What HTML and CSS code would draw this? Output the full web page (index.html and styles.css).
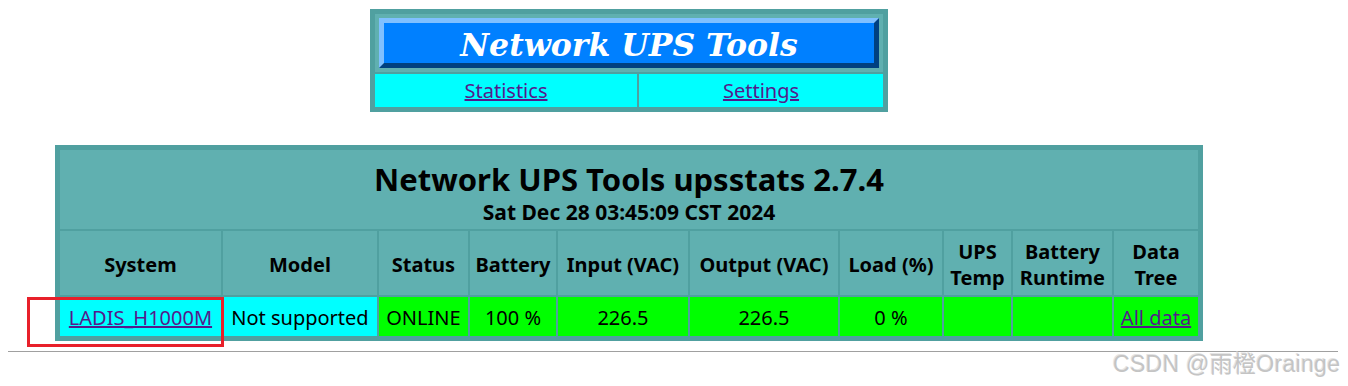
FILE: index.html
```html
<!DOCTYPE html>
<html>
<head>
<meta charset="utf-8">
<title>Network UPS Tools upsstats</title>
<link rel="stylesheet" href="styles.css">
</head>
<body>
<div class="page">
  <table class="nav">
    <tr>
      <td class="nav-head" colspan="2"><div class="logo">Network UPS Tools</div></td>
    </tr>
    <tr>
      <td class="nav-cell nav-left"><a href="#">Statistics</a></td>
      <td class="nav-cell nav-right"><a href="#">Settings</a></td>
    </tr>
  </table>

  <table class="stats">
    <colgroup>
      <col class="c-system"><col class="c-model"><col class="c-status"><col class="c-battery"><col class="c-input"><col class="c-output"><col class="c-load"><col class="c-temp"><col class="c-runtime"><col class="c-tree">
    </colgroup>
    <tr>
      <th class="title" colspan="10">
        <div class="title-main">Network UPS Tools upsstats 2.7.4</div>
        <div class="title-date">Sat Dec 28 03:45:09 CST 2024</div>
      </th>
    </tr>
    <tr class="head">
      <th>System</th>
      <th>Model</th>
      <th>Status</th>
      <th>Battery</th>
      <th>Input (VAC)</th>
      <th>Output (VAC)</th>
      <th>Load (%)</th>
      <th>UPS<br>Temp</th>
      <th>Battery<br>Runtime</th>
      <th>Data<br>Tree</th>
    </tr>
    <tr class="data">
      <td class="cyan"><a href="#">LADIS_H1000M</a></td>
      <td class="cyan">Not supported</td>
      <td class="green">ONLINE</td>
      <td class="green">100 %</td>
      <td class="green">226.5</td>
      <td class="green">226.5</td>
      <td class="green">0 %</td>
      <td class="green"></td>
      <td class="green"></td>
      <td class="green"><a href="#">All data</a></td>
    </tr>
  </table>
</div>
<hr class="rule">
<div class="annotation"></div>
<div class="watermark">CSDN @雨橙Orainge</div>
</body>
</html>
```

FILE: styles.css
```css
html, body {
  margin: 0;
  padding: 0;
  background: #ffffff;
}

body {
  margin: 8px;
  font-family: "Noto Sans", "Open Sans", "Noto Sans CJK SC", sans-serif;
  color: #000000;
  position: relative;
  min-height: 370px;
}

.page {
  width: 1242px;
}

a {
  color: #551a8b;
  text-decoration: underline;
}

/* ---- top navigation table ---- */
.nav {
  width: 518px;
  margin: 1px auto 0;
  background: #50a0a0;
  border-collapse: separate;
  border-spacing: 2px;
  padding: 3px;
}

.nav-head {
  background: #60b0b0;
  padding: 4px;
  height: 58px;
  box-sizing: border-box;
}

.logo {
  box-sizing: border-box;
  height: 50px;
  background: #0080ff;
  border: 5px solid;
  border-color: #80c0ff #004080 #004080 #80c0ff;
  color: #ffffff;
  font-family: "DejaVu Serif", "Liberation Serif", serif;
  font-weight: bold;
  font-style: italic;
  font-size: 31.5px;
  line-height: 43px;
  text-align: center;
}

.nav-cell {
  background: #00ffff;
  height: 33px;
  padding: 0;
  text-align: center;
  font-size: 20px;
  line-height: 33px;
}

.nav-left {
  width: 262px;
}

/* ---- stats table ---- */
.stats {
  width: 1148px;
  margin: 33px auto 0;
  table-layout: fixed;
  background: #50a0a0;
  border-collapse: separate;
  border-spacing: 2px;
  padding: 3px;
}

.c-system { width: 161px; }
.c-model { width: 154px; }
.c-status { width: 89px; }
.c-battery { width: 86px; }
.c-input { width: 130px; }
.c-output { width: 148px; }
.c-load { width: 102px; }
.c-temp { width: 67px; }
.c-runtime { width: 99px; }
.c-tree { width: 84px; }

.stats th,
.stats td {
  padding: 0;
  text-align: center;
  white-space: nowrap;
  overflow: hidden;
}

.title {
  background: #60b0b0;
  height: 79px;
  vertical-align: middle;
}

.title-main {
  font-size: 31px;
  font-weight: bold;
  line-height: 42px;
  padding-top: 3px;
}

.title-date {
  font-size: 21px;
  font-weight: bold;
  line-height: 25px;
}

.head th {
  background: #60b0b0;
  height: 64px;
  box-sizing: border-box;
  padding-top: 4px;
  font-size: 20px;
  font-weight: bold;
  line-height: 26px;
}

.data td {
  height: 39px;
  box-sizing: border-box;
  padding-top: 3px;
  font-size: 20px;
  line-height: 26px;
}

.cyan { background: #00ffff; }
.green { background: #00ff00; }

.rule {
  border: 0;
  border-top: 1px solid #a0a0a0;
  height: 0;
  margin-top: 10px;
  margin-bottom: 0;
  margin-left: -8px;
  margin-right: 0;
  width: 1338px;
}

/* overlay annotation (red highlight box) */
.annotation {
  position: absolute;
  left: 19px;
  top: 289px;
  width: 197px;
  height: 50px;
  box-sizing: border-box;
  border: 3px solid #e8202a;
}

/* image watermark */
.watermark {
  position: absolute;
  left: 1105px;
  top: 337px;
  font-family: "Liberation Sans", "Noto Sans CJK SC", sans-serif;
  font-size: 23px;
  letter-spacing: 0.3px;
  color: #c4c4c4;
  text-shadow: 1px 1px 0 #ffffff, -1px -1px 0 #e4e4e4;
  white-space: nowrap;
}
```
